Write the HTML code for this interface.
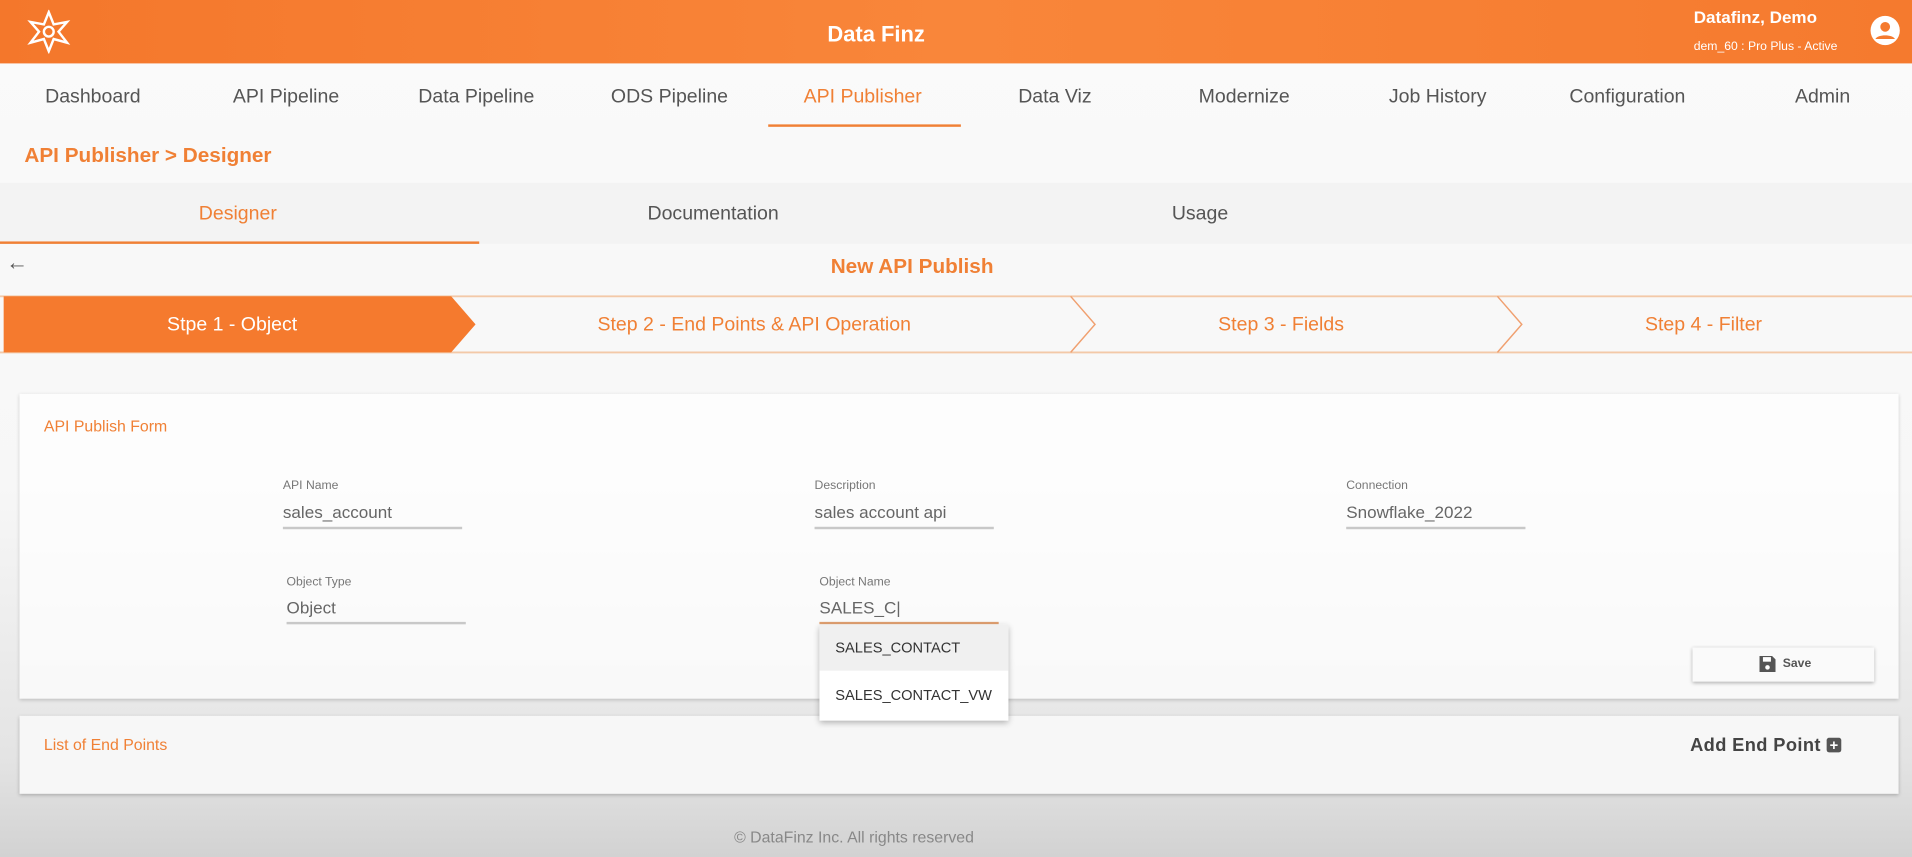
<!DOCTYPE html>
<html><head><meta charset="utf-8"><style>
html,body{margin:0;padding:0;width:1912px;height:857px;overflow:hidden;font-family:"Liberation Sans",sans-serif}
#w{position:absolute;left:0;top:0;width:1568px;height:703px;transform:scale(1.21939);transform-origin:0 0;background:linear-gradient(#fafafa 0,#f7f7f7 400px,#e4e4e4 620px,#d2d2d2 703px);overflow:hidden}
.a{position:absolute;white-space:nowrap}
.hdr{left:0;top:0;width:1568px;height:52px;background:linear-gradient(90deg,#f4772b,#f9863a 50%,#f57a2e)}
.nav{top:71px;font-size:16px;color:#555}
.o{color:#f08035}
.lab{font-size:10px;color:#777}
.val{font-size:14px;color:#666}
.ln{height:2px;background:#c8c8c8}
</style></head><body><div id="w">
<div class="a hdr"></div>
<svg class="a" style="left:20px;top:8px" width="40" height="36" viewBox="0 0 40 36"><g fill="none" stroke="#fff" stroke-width="2"><path d="M20 2L24 12 35 10 28 18 35 27 24 24 20 34 16 24 5 27 12 18 5 10 16 12Z"/><circle cx="20" cy="18" r="4"/></g></svg>
<div class="a" style="left:0;width:1437px;text-align:center;top:18px;font-size:18px;font-weight:bold;color:#fff">Data Finz</div>
<div class="a" style="left:1389px;top:6px;font-size:14px;font-weight:bold;color:#fff">Datafinz, Demo</div>
<div class="a" style="left:1389px;top:33px;font-size:10px;color:#fff">dem_60 : Pro Plus - Active</div>
<svg class="a" style="left:1533px;top:12px" width="26" height="26" viewBox="0 0 26 26"><circle cx="13" cy="13" r="12" fill="#fff"/><circle cx="13" cy="10" r="4" fill="#f57a2e"/><path d="M5 20c2-4 14-4 16 0" fill="#f57a2e"/></svg>
<div class="a nav" style="left:37px">Dashboard</div>
<div class="a nav" style="left:191px">API Pipeline</div>
<div class="a nav" style="left:343px">Data Pipeline</div>
<div class="a nav" style="left:501px">ODS Pipeline</div>
<div class="a nav o" style="left:659px">API Publisher</div>
<div class="a nav" style="left:835px">Data Viz</div>
<div class="a nav" style="left:983px">Modernize</div>
<div class="a nav" style="left:1139px">Job History</div>
<div class="a nav" style="left:1287px">Configuration</div>
<div class="a nav" style="left:1472px">Admin</div>
<div class="a" style="left:630px;top:102px;width:158px;height:2px;background:#f08035"></div>
<div class="a o" style="left:20px;top:118px;font-size:17px;font-weight:bold">API Publisher &gt; Designer</div>
<div class="a" style="left:0;top:150px;width:1568px;height:50px;background:#f3f3f3"></div>
<div class="a o" style="left:163px;top:167px;font-size:16px">Designer</div>
<div class="a" style="left:531px;top:167px;font-size:16px;color:#555">Documentation</div>
<div class="a" style="left:961px;top:167px;font-size:16px;color:#555">Usage</div>
<div class="a" style="left:0;top:198px;width:393px;height:2px;background:#f08035"></div>
<div class="a" style="left:5px;top:205px;font-size:18px;color:#555">&#8592;</div>
<div class="a o" style="left:0;width:1496px;text-align:center;top:209px;font-size:17px;font-weight:bold">New API Publish</div>
<svg class="a" style="left:0;top:242px" width="1568" height="48"><path d="M0 1H1568M0 47H1568" stroke="#f3c9a8" stroke-width="1.5"/><path d="M3 1H370L390 24 370 47H3Z" fill="#f57a2e"/><path d="M878 1L898 24 878 47M1228 1L1248 24 1228 47" fill="none" stroke="#f0a070" stroke-width="1.2"/></svg>
<div class="a" style="left:137px;top:258px;font-size:16px;color:#fff">Stpe 1 - Object</div>
<div class="a o" style="left:490px;top:258px;font-size:16px">Step 2 - End Points &amp; API Operation</div>
<div class="a o" style="left:999px;top:258px;font-size:16px">Step 3 - Fields</div>
<div class="a o" style="left:1349px;top:258px;font-size:16px">Step 4 - Filter</div>
<div class="a" style="left:16px;top:323px;width:1541px;height:250px;background:#fff;opacity:.75;box-shadow:0 1px 3px rgba(0,0,0,.25)"></div>
<div class="a o" style="left:36px;top:342px;font-size:13px">API Publish Form</div>
<div class="a lab" style="left:232px;top:393px">API Name</div>
<div class="a val" style="left:232px;top:412px">sales_account</div>
<div class="a ln" style="left:232px;top:432px;width:147px"></div>
<div class="a lab" style="left:668px;top:393px">Description</div>
<div class="a val" style="left:668px;top:412px">sales account api</div>
<div class="a ln" style="left:668px;top:432px;width:147px"></div>
<div class="a lab" style="left:1104px;top:393px">Connection</div>
<div class="a val" style="left:1104px;top:412px">Snowflake_2022</div>
<div class="a ln" style="left:1104px;top:432px;width:147px"></div>
<div class="a lab" style="left:235px;top:472px">Object Type</div>
<div class="a val" style="left:235px;top:490px">Object</div>
<div class="a ln" style="left:235px;top:510px;width:147px"></div>
<div class="a lab o" style="left:672px;top:472px">Object Name</div>
<div class="a val" style="left:672px;top:490px">SALES_C|</div>
<div class="a" style="left:672px;top:510px;width:147px;height:2px;background:#e0a070"></div>
<div class="a" style="left:1388px;top:531px;width:149px;height:28px;background:#fafafa;box-shadow:0 1px 3px rgba(0,0,0,.3)"></div>
<svg class="a" style="left:1442px;top:537px" width="15" height="15" viewBox="0 0 16 16"><path d="M1 1H12L15 4V15H1Z" fill="#555"/><rect x="4" y="2" width="7" height="4" fill="#fff"/><circle cx="8" cy="11" r="2" fill="#fff"/></svg>
<div class="a" style="left:1462px;top:539px;font-size:10px;font-weight:bold;color:#555">Save</div>
<div class="a" style="left:16px;top:587px;width:1541px;height:64px;background:#f7f7f7;box-shadow:0 1px 3px rgba(0,0,0,.25)"></div>
<div class="a o" style="left:36px;top:603px;font-size:13px">List of End Points</div>
<div class="a" style="left:1386px;top:603px;font-size:15px;font-weight:bold;color:#444;letter-spacing:0.3px">Add End Point</div>
<div class="a" style="left:1498px;top:605px;width:12px;height:12px;background:#555;border-radius:2px;color:#fff;font-size:12px;line-height:12px;text-align:center;font-weight:bold">+</div>
<div class="a" style="left:672px;top:512px;width:155px;height:79px;background:#fff;box-shadow:0 2px 5px rgba(0,0,0,.3)"></div>
<div class="a" style="left:672px;top:512px;width:155px;height:38px;background:#f0f0f0"></div>
<div class="a" style="left:685px;top:524px;font-size:12px;color:#333">SALES_CONTACT</div>
<div class="a" style="left:685px;top:563px;font-size:12px;color:#333">SALES_CONTACT_VW</div>
<div class="a" style="left:602px;top:679px;font-size:13px;color:#888">© DataFinz Inc. All rights reserved</div>
</div></body></html>
